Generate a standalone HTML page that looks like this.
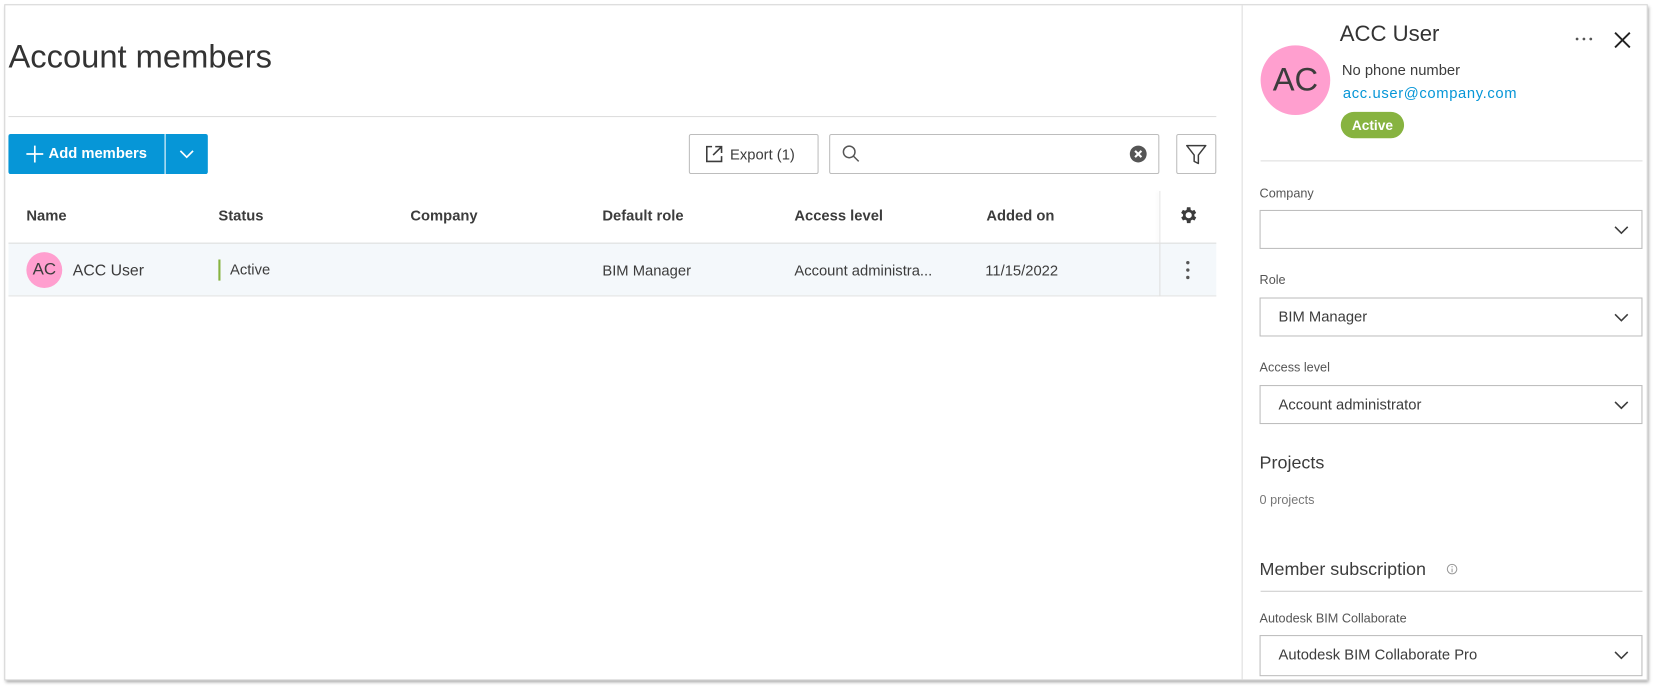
<!DOCTYPE html>
<html><head><meta charset="utf-8"><style>
*{box-sizing:border-box;margin:0;padding:0}
html,body{width:1654px;height:688px;overflow:hidden;background:#fff;font-family:"Liberation Sans",sans-serif;color:#3c3c3c}
#s{position:absolute;left:0;top:0;width:1568px;height:652px;transform:scale(1.0549);transform-origin:0 0}
.a{position:absolute}
.frame{left:4px;top:4px;width:1558px;height:641px;border:1px solid #d4d4d4;box-shadow:1px 2px 3px rgba(0,0,0,.35);background:#fff}
.th{position:absolute;top:196px;font-size:14px;font-weight:bold;color:#3c3c3c}
.td{position:absolute;top:248px;font-size:14px;color:#3c3c3c}
.lbl{position:absolute;left:1194px;font-size:12px;color:#555}
.sel{position:absolute;left:1194px;width:363px;height:37px;border:1px solid #bdbdbd;font-size:14px;padding:9px 17px;color:#3c3c3c}
.sel svg{position:absolute;right:12px;top:13px}
</style></head><body><div id="s">
<div class="a frame"></div>
<div class="a" style="left:8px;top:36px;font-size:31px;color:#333">Account members</div>
<div class="a" style="left:8px;top:110px;width:1145px;height:1px;background:#ddd"></div>
<div class="a" style="left:8px;top:127px;width:148px;height:38px;background:#0696d7;border-radius:2px 0 0 2px;color:#fff;font-size:14px;font-weight:bold;padding:10px 0 0 38px">Add members</div>
<svg class="a" style="left:24px;top:137px" width="18" height="18"><path d="M9 1V17M1 9H17" stroke="#fff" stroke-width="1.6"/></svg>
<div class="a" style="left:157px;top:127px;width:40px;height:38px;background:#0696d7;border-radius:0 2px 2px 0"></div>
<svg class="a" style="left:170px;top:141px" width="14" height="10"><path d="M1 2L7 8L13 2" stroke="#fff" stroke-width="1.6" fill="none"/></svg>
<div class="a" style="left:653px;top:127px;width:123px;height:38px;border:1px solid #bdbdbd;border-radius:2px;font-size:14px;padding:10px 0 0 38px">Export (1)</div>
<svg class="a" style="left:667px;top:136px" width="20" height="20"><path d="M8 3H3V17H17V12M11 3H17V9M17 3L9 11" stroke="#3c3c3c" stroke-width="1.5" fill="none"/></svg>
<div class="a" style="left:786px;top:127px;width:313px;height:38px;border:1px solid #bdbdbd;border-radius:2px"></div>
<svg class="a" style="left:797px;top:136px" width="20" height="20"><circle cx="8" cy="8" r="5.5" stroke="#555" stroke-width="1.4" fill="none"/><path d="M12 12L17 17" stroke="#555" stroke-width="1.4"/></svg>
<svg class="a" style="left:1070px;top:137px" width="18" height="18"><circle cx="9" cy="9" r="8" fill="#555"/><path d="M6 6L12 12M12 6L6 12" stroke="#fff" stroke-width="2"/></svg>
<div class="a" style="left:1115px;top:127px;width:38px;height:38px;border:1px solid #bdbdbd;border-radius:2px"></div>
<svg class="a" style="left:1122px;top:134px" width="24" height="24"><path d="M3 4H21L14 13V21L10 19V13Z" stroke="#3c3c3c" stroke-width="1.4" fill="none" stroke-linejoin="round"/></svg>
<div class="a" style="left:1099px;top:181px;width:1px;height:100px;background:#e6e6e6;box-shadow:-2px 0 3px rgba(0,0,0,.05)"></div>
<svg class="a" style="left:1116px;top:194px" width="20" height="20" viewBox="0 0 24 24"><path fill="#3c3c3c" d="M19.4 13a7.5 7.5 0 000-2l2.1-1.6-2-3.5-2.5 1a7.7 7.7 0 00-1.7-1L15 3h-4l-.4 2.9a7.7 7.7 0 00-1.7 1l-2.5-1-2 3.5L6.6 11a7.5 7.5 0 000 2l-2.1 1.6 2 3.5 2.5-1a7.7 7.7 0 001.7 1L11 21h4l.4-2.9a7.7 7.7 0 001.7-1l2.5 1 2-3.5zM13 15.5a3.5 3.5 0 110-7 3.5 3.5 0 010 7z"/></svg>
<div class="th" style="left:25px">Name</div>
<div class="th" style="left:207px">Status</div>
<div class="th" style="left:389px">Company</div>
<div class="th" style="left:571px">Default role</div>
<div class="th" style="left:753px">Access level</div>
<div class="th" style="left:935px">Added on</div>
<div class="a" style="left:8px;top:230px;width:1145px;height:51px;background:#f4f8fb;border-top:1px solid #ddd;border-bottom:1px solid #e4e4e4"></div>
<div class="a" style="left:1099px;top:231px;width:1px;height:50px;background:#e0e0e0"></div>
<div class="a" style="left:25px;top:239px;width:34px;height:34px;border-radius:50%;background:#ff9fcf;font-size:16px;text-align:center;line-height:34px;color:#3c3c3c">AC</div>
<div class="td" style="left:69px;font-size:15px">ACC User</div>
<div class="a" style="left:207px;top:246px;width:2px;height:20px;background:#87b340"></div>
<div class="td" style="left:218px;top:247px">Active</div>
<div class="td" style="left:571px">BIM Manager</div>
<div class="td" style="left:753px">Account administra...</div>
<div class="td" style="left:934px">11/15/2022</div>
<svg class="a" style="left:1122px;top:246px" width="8" height="20"><circle cx="4" cy="3" r="1.6" fill="#555"/><circle cx="4" cy="10" r="1.6" fill="#555"/><circle cx="4" cy="17" r="1.6" fill="#555"/></svg>
<div class="a" style="left:1177px;top:5px;width:1px;height:640px;background:#ddd"></div>
<div class="a" style="left:1195px;top:43px;width:66px;height:66px;border-radius:50%;background:#ff9fcf;font-size:31px;text-align:center;line-height:66px;color:#3c3c3c">AC</div>
<div class="a" style="left:1270px;top:21px;font-size:21px;color:#333">ACC User</div>
<div class="a" style="left:1272px;top:58px;font-size:14px;color:#3c3c3c">No phone number</div>
<div class="a" style="left:1273px;top:80px;font-size:14px;color:#0696d7;letter-spacing:.6px">acc.user@company.com</div>
<div class="a" style="left:1271px;top:106px;width:60px;height:25px;border-radius:13px;background:#87b340;color:#fff;font-size:13px;font-weight:bold;text-align:center;line-height:25px">Active</div>
<svg class="a" style="left:1492px;top:34px" width="20" height="6"><circle cx="3" cy="3" r="1.3" fill="#555"/><circle cx="9.5" cy="3" r="1.3" fill="#555"/><circle cx="16" cy="3" r="1.3" fill="#555"/></svg>
<svg class="a" style="left:1529px;top:29px" width="18" height="18"><path d="M2 2L16 16M16 2L2 16" stroke="#222" stroke-width="1.8"/></svg>
<div class="a" style="left:1195px;top:152px;width:362px;height:1px;background:#ddd"></div>
<div class="lbl" style="top:176px">Company</div>
<div class="sel" style="top:199px"><svg width="14" height="10"><path d="M1 2L7 8L13 2" stroke="#3c3c3c" stroke-width="1.5" fill="none"/></svg></div>
<div class="lbl" style="top:258px">Role</div>
<div class="sel" style="top:282px">BIM Manager<svg width="14" height="10"><path d="M1 2L7 8L13 2" stroke="#3c3c3c" stroke-width="1.5" fill="none"/></svg></div>
<div class="lbl" style="top:341px">Access level</div>
<div class="sel" style="top:365px">Account administrator<svg width="14" height="10"><path d="M1 2L7 8L13 2" stroke="#3c3c3c" stroke-width="1.5" fill="none"/></svg></div>
<div class="a" style="left:1194px;top:429px;font-size:17px;color:#3c3c3c">Projects</div>
<div class="a" style="left:1194px;top:467px;font-size:12px;color:#777">0 projects</div>
<div class="a" style="left:1194px;top:530px;font-size:17px;color:#3c3c3c">Member subscription</div>
<svg class="a" style="left:1371px;top:534px" width="11" height="11"><circle cx="5.5" cy="5.5" r="4.5" stroke="#999" stroke-width="1" fill="none"/><path d="M5.5 5V8.5" stroke="#999"/><circle cx="5.5" cy="3.3" r=".6" fill="#999"/></svg>
<div class="a" style="left:1195px;top:560px;width:362px;height:1px;background:#ccc"></div>
<div class="lbl" style="top:579px">Autodesk BIM Collaborate</div>
<div class="sel" style="top:602px;height:39px">Autodesk BIM Collaborate Pro<svg width="14" height="10"><path d="M1 2L7 8L13 2" stroke="#3c3c3c" stroke-width="1.5" fill="none"/></svg></div>
</div></body></html>
